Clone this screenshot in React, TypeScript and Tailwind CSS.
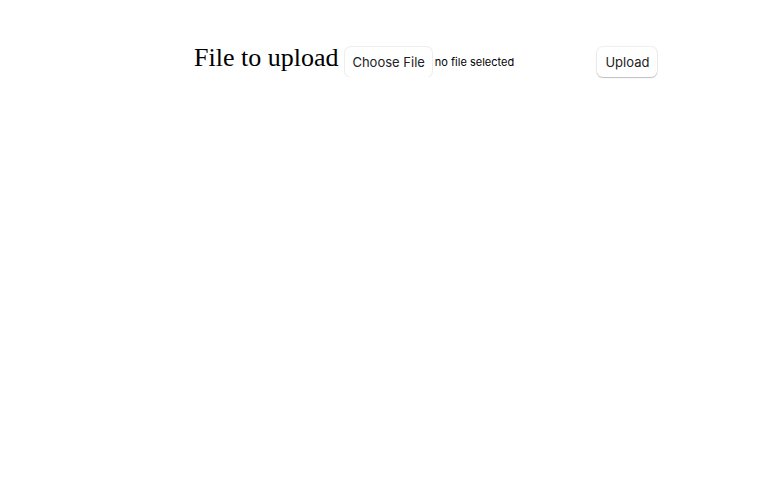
import { useRef, useState } from 'react'

const BUTTON_CLS =
  'h-[30px] cursor-pointer rounded-md bg-white text-[13px] leading-4 whitespace-nowrap text-[#222222]'

export default function App() {
  const inputRef = useRef<HTMLInputElement>(null)
  const [fileName, setFileName] = useState('')

  return (
    <main className="min-h-screen bg-white pt-[46px]">
      <form
        className="ml-[25%] flex items-start px-0.5 font-['Inter',sans-serif]"
        onSubmit={(e) => e.preventDefault()}
      >
        <label
          htmlFor="file"
          className="font-['Liberation_Serif',serif] text-[26px] leading-6 whitespace-nowrap text-black"
        >
          File to upload
        </label>
        <div className="ml-1.5 flex w-[253px] items-center overflow-hidden pt-px pl-px">
          <input
            ref={inputRef}
            id="file"
            type="file"
            className="hidden"
            onChange={(e) => setFileName(e.target.files?.[0]?.name ?? '')}
          />
          <button
            type="button"
            className={`${BUTTON_CLS} px-[7px] shadow-[0_0_1px_1px_rgba(0,0,0,0.08)]`}
            onClick={() => inputRef.current?.click()}
          >
            Choose File
          </button>
          <span className="ml-[3px] truncate text-[11px] leading-4 text-black">
            {fileName || 'no file selected'}
          </span>
        </div>
        <button
          type="submit"
          className={`${BUTTON_CLS} mt-px px-2 shadow-[0_0_1px_1px_rgba(0,0,0,0.07),0_1px_1px_rgba(0,0,0,0.2)]`}
        >
          Upload
        </button>
      </form>
    </main>
  )
}
